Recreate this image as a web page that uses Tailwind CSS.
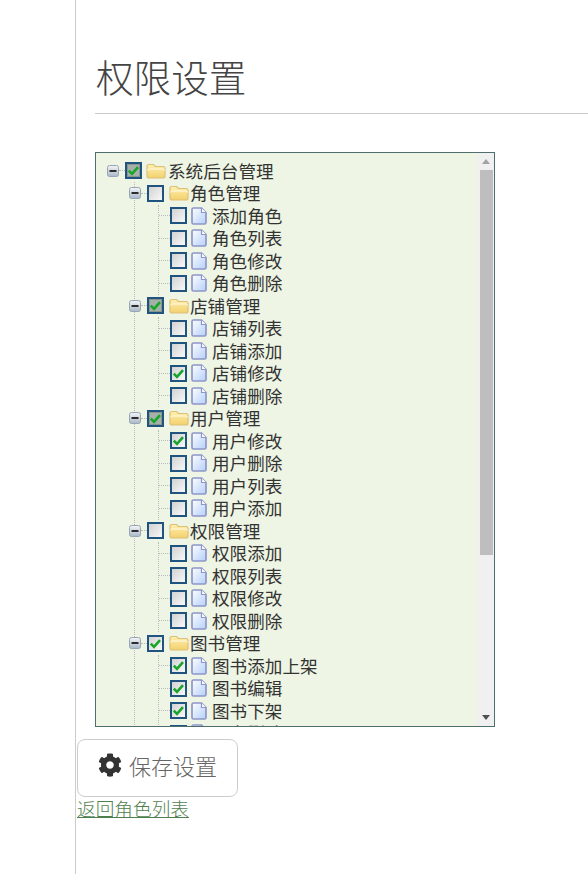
<!DOCTYPE html>
<html lang="zh-CN">
  <head>
    <meta charset="UTF-8" />
    <title>权限设置</title>
    <script src="https://cdn.jsdelivr.net/npm/@tailwindcss/browser@4"></script>
  </head>
  <body class="bg-white font-['Noto_Sans_CJK_SC',sans-serif] text-[#333]">
    <!-- shared tree icons -->
    <svg class="absolute h-0 w-0">
      <defs>
        <linearGradient id="boxFill" x1="0" y1="0" x2="1" y2="1">
          <stop offset="0" stop-color="#cfcfcf" />
          <stop offset="1" stop-color="#fbfbfb" />
        </linearGradient>
        <linearGradient id="folderFill" x1="0" y1="0" x2="0" y2="1">
          <stop offset="0" stop-color="#fff0b0" />
          <stop offset="1" stop-color="#f3d06c" />
        </linearGradient>
        <linearGradient id="fileFill" x1="0" y1="0" x2="1" y2="1">
          <stop offset="0" stop-color="#fdfeff" />
          <stop offset="1" stop-color="#b5cffa" />
        </linearGradient>
        <linearGradient id="minusFill" x1="0" y1="0" x2="0" y2="1">
          <stop offset="0" stop-color="#f4f6f8" />
          <stop offset="1" stop-color="#a9b7c7" />
        </linearGradient>
        <symbol id="empty" viewBox="0 0 17 17">
          <rect x="1" y="1" width="15" height="15" fill="url(#boxFill)" stroke="#1f5480" stroke-width="2" />
        </symbol>
        <symbol id="checked" viewBox="0 0 17 17">
          <rect x="1" y="1" width="15" height="15" fill="url(#boxFill)" stroke="#1f5480" stroke-width="2" />
          <path d="M3.8 8.6l3.2 3.2 6-6.6" fill="none" stroke="#17a62a" stroke-width="2.6" />
        </symbol>
        <symbol id="partial" viewBox="0 0 17 17">
          <rect x="1" y="1" width="15" height="15" fill="#8b938f" stroke="#1f5480" stroke-width="2" />
          <rect x="3" y="3" width="11" height="11" fill="#a5b0a9" />
          <path d="M3.8 8.6l3.2 3.2 6-6.6" fill="none" stroke="#17a62a" stroke-width="2.6" />
        </symbol>
        <symbol id="folder" viewBox="0 0 20 16">
          <path d="M1 13V3.5Q1 1.5 3 1.5h4.5l2 2H17q2 0 2 2V13q0 2-2 2H3q-2 0-2-2z" fill="url(#folderFill)" stroke="#dcc07a" stroke-width="1.2" />
          <path d="M1.5 7.5q0-1.5 1.5-1.5h14q1.5 0 1.5 1.5" fill="none" stroke="#fffbe6" />
        </symbol>
        <symbol id="file" viewBox="0 0 17 18">
          <path d="M2.5 1h8l4.5 4.5V15.5q0 1.5-1.5 1.5h-11Q1 17 1 15.5V2.5Q1 1 2.5 1z" fill="url(#fileFill)" stroke="#8f97c9" stroke-width="1.7" />
          <path d="M10.5 1v4.5H15" fill="#fff" stroke="#8f97c9" stroke-width="1.2" />
        </symbol>
        <symbol id="minus" viewBox="0 0 12 12">
          <rect x="0.5" y="0.5" width="11" height="11" rx="2" fill="url(#minusFill)" stroke="#97a5b5" />
          <rect x="2.5" y="5" width="7" height="2" fill="#2d2d2d" />
        </symbol>
      </defs>
    </svg>

    <main class="ml-[75px] min-h-[874px] border-l border-[#ccc]">
      <h1 class="ml-[19px] border-b border-[#ccc] pt-[56px] pb-[17px] pl-px text-[37.6px] leading-10 font-light text-[#444]">权限设置</h1>

      <div class="relative mt-[38px] ml-[19px] h-[575px] w-[400px] overflow-hidden border border-[#4f6f6f] bg-[#eef5e4] text-[17.6px]">
        <ul class="pt-[6.5px]">
          <li>
            <div class="flex h-[22.5px] items-center pl-[11px]">
              <svg class="h-3 w-3 shrink-0"><use href="#minus" /></svg>
              <span class="w-[6px] border-t border-dotted border-[#bbb]"></span>
              <svg class="h-[17px] w-[17px] shrink-0"><use href="#partial" /></svg>
              <svg class="ml-1 h-4 w-5 shrink-0"><use href="#folder" /></svg>
              <span class="ml-[2px]">系统后台管理</span>
            </div>

            <ul class="ml-[38px] border-l border-dotted border-[#bbb]">
              <li>
                <div class="flex h-[22.5px] items-center">
                  <svg class="-ml-[6px] h-3 w-3 shrink-0"><use href="#minus" /></svg>
                  <span class="w-[6px] border-t border-dotted border-[#bbb]"></span>
                  <svg class="h-[17px] w-[17px] shrink-0"><use href="#empty" /></svg>
                  <svg class="ml-[5px] h-4 w-5 shrink-0"><use href="#folder" /></svg>
                  <span class="ml-[1px]">角色管理</span>
                </div>
                <ul class="ml-[23px] border-l border-dotted border-[#bbb]">
                  <li class="flex h-[22.5px] items-center"><span class="w-[11px] border-t border-dotted border-[#bbb]"></span><svg class="h-[17px] w-[17px] shrink-0"><use href="#empty" /></svg><svg class="ml-[4px] h-[18px] w-[17px] shrink-0"><use href="#file" /></svg><span class="ml-[4px]">添加角色</span></li>
                  <li class="flex h-[22.5px] items-center"><span class="w-[11px] border-t border-dotted border-[#bbb]"></span><svg class="h-[17px] w-[17px] shrink-0"><use href="#empty" /></svg><svg class="ml-[4px] h-[18px] w-[17px] shrink-0"><use href="#file" /></svg><span class="ml-[4px]">角色列表</span></li>
                  <li class="flex h-[22.5px] items-center"><span class="w-[11px] border-t border-dotted border-[#bbb]"></span><svg class="h-[17px] w-[17px] shrink-0"><use href="#empty" /></svg><svg class="ml-[4px] h-[18px] w-[17px] shrink-0"><use href="#file" /></svg><span class="ml-[4px]">角色修改</span></li>
                  <li class="flex h-[22.5px] items-center"><span class="w-[11px] border-t border-dotted border-[#bbb]"></span><svg class="h-[17px] w-[17px] shrink-0"><use href="#empty" /></svg><svg class="ml-[4px] h-[18px] w-[17px] shrink-0"><use href="#file" /></svg><span class="ml-[4px]">角色删除</span></li>
                </ul>
              </li>
              <li>
                <div class="flex h-[22.5px] items-center">
                  <svg class="-ml-[6px] h-3 w-3 shrink-0"><use href="#minus" /></svg>
                  <span class="w-[6px] border-t border-dotted border-[#bbb]"></span>
                  <svg class="h-[17px] w-[17px] shrink-0"><use href="#partial" /></svg>
                  <svg class="ml-[5px] h-4 w-5 shrink-0"><use href="#folder" /></svg>
                  <span class="ml-[1px]">店铺管理</span>
                </div>
                <ul class="ml-[23px] border-l border-dotted border-[#bbb]">
                  <li class="flex h-[22.5px] items-center"><span class="w-[11px] border-t border-dotted border-[#bbb]"></span><svg class="h-[17px] w-[17px] shrink-0"><use href="#empty" /></svg><svg class="ml-[4px] h-[18px] w-[17px] shrink-0"><use href="#file" /></svg><span class="ml-[4px]">店铺列表</span></li>
                  <li class="flex h-[22.5px] items-center"><span class="w-[11px] border-t border-dotted border-[#bbb]"></span><svg class="h-[17px] w-[17px] shrink-0"><use href="#empty" /></svg><svg class="ml-[4px] h-[18px] w-[17px] shrink-0"><use href="#file" /></svg><span class="ml-[4px]">店铺添加</span></li>
                  <li class="flex h-[22.5px] items-center"><span class="w-[11px] border-t border-dotted border-[#bbb]"></span><svg class="h-[17px] w-[17px] shrink-0"><use href="#checked" /></svg><svg class="ml-[4px] h-[18px] w-[17px] shrink-0"><use href="#file" /></svg><span class="ml-[4px]">店铺修改</span></li>
                  <li class="flex h-[22.5px] items-center"><span class="w-[11px] border-t border-dotted border-[#bbb]"></span><svg class="h-[17px] w-[17px] shrink-0"><use href="#empty" /></svg><svg class="ml-[4px] h-[18px] w-[17px] shrink-0"><use href="#file" /></svg><span class="ml-[4px]">店铺删除</span></li>
                </ul>
              </li>
              <li>
                <div class="flex h-[22.5px] items-center">
                  <svg class="-ml-[6px] h-3 w-3 shrink-0"><use href="#minus" /></svg>
                  <span class="w-[6px] border-t border-dotted border-[#bbb]"></span>
                  <svg class="h-[17px] w-[17px] shrink-0"><use href="#partial" /></svg>
                  <svg class="ml-[5px] h-4 w-5 shrink-0"><use href="#folder" /></svg>
                  <span class="ml-[1px]">用户管理</span>
                </div>
                <ul class="ml-[23px] border-l border-dotted border-[#bbb]">
                  <li class="flex h-[22.5px] items-center"><span class="w-[11px] border-t border-dotted border-[#bbb]"></span><svg class="h-[17px] w-[17px] shrink-0"><use href="#checked" /></svg><svg class="ml-[4px] h-[18px] w-[17px] shrink-0"><use href="#file" /></svg><span class="ml-[4px]">用户修改</span></li>
                  <li class="flex h-[22.5px] items-center"><span class="w-[11px] border-t border-dotted border-[#bbb]"></span><svg class="h-[17px] w-[17px] shrink-0"><use href="#empty" /></svg><svg class="ml-[4px] h-[18px] w-[17px] shrink-0"><use href="#file" /></svg><span class="ml-[4px]">用户删除</span></li>
                  <li class="flex h-[22.5px] items-center"><span class="w-[11px] border-t border-dotted border-[#bbb]"></span><svg class="h-[17px] w-[17px] shrink-0"><use href="#empty" /></svg><svg class="ml-[4px] h-[18px] w-[17px] shrink-0"><use href="#file" /></svg><span class="ml-[4px]">用户列表</span></li>
                  <li class="flex h-[22.5px] items-center"><span class="w-[11px] border-t border-dotted border-[#bbb]"></span><svg class="h-[17px] w-[17px] shrink-0"><use href="#empty" /></svg><svg class="ml-[4px] h-[18px] w-[17px] shrink-0"><use href="#file" /></svg><span class="ml-[4px]">用户添加</span></li>
                </ul>
              </li>
              <li>
                <div class="flex h-[22.5px] items-center">
                  <svg class="-ml-[6px] h-3 w-3 shrink-0"><use href="#minus" /></svg>
                  <span class="w-[6px] border-t border-dotted border-[#bbb]"></span>
                  <svg class="h-[17px] w-[17px] shrink-0"><use href="#empty" /></svg>
                  <svg class="ml-[5px] h-4 w-5 shrink-0"><use href="#folder" /></svg>
                  <span class="ml-[1px]">权限管理</span>
                </div>
                <ul class="ml-[23px] border-l border-dotted border-[#bbb]">
                  <li class="flex h-[22.5px] items-center"><span class="w-[11px] border-t border-dotted border-[#bbb]"></span><svg class="h-[17px] w-[17px] shrink-0"><use href="#empty" /></svg><svg class="ml-[4px] h-[18px] w-[17px] shrink-0"><use href="#file" /></svg><span class="ml-[4px]">权限添加</span></li>
                  <li class="flex h-[22.5px] items-center"><span class="w-[11px] border-t border-dotted border-[#bbb]"></span><svg class="h-[17px] w-[17px] shrink-0"><use href="#empty" /></svg><svg class="ml-[4px] h-[18px] w-[17px] shrink-0"><use href="#file" /></svg><span class="ml-[4px]">权限列表</span></li>
                  <li class="flex h-[22.5px] items-center"><span class="w-[11px] border-t border-dotted border-[#bbb]"></span><svg class="h-[17px] w-[17px] shrink-0"><use href="#empty" /></svg><svg class="ml-[4px] h-[18px] w-[17px] shrink-0"><use href="#file" /></svg><span class="ml-[4px]">权限修改</span></li>
                  <li class="flex h-[22.5px] items-center"><span class="w-[11px] border-t border-dotted border-[#bbb]"></span><svg class="h-[17px] w-[17px] shrink-0"><use href="#empty" /></svg><svg class="ml-[4px] h-[18px] w-[17px] shrink-0"><use href="#file" /></svg><span class="ml-[4px]">权限删除</span></li>
                </ul>
              </li>
              <li>
                <div class="flex h-[22.5px] items-center">
                  <svg class="-ml-[6px] h-3 w-3 shrink-0"><use href="#minus" /></svg>
                  <span class="w-[6px] border-t border-dotted border-[#bbb]"></span>
                  <svg class="h-[17px] w-[17px] shrink-0"><use href="#checked" /></svg>
                  <svg class="ml-[5px] h-4 w-5 shrink-0"><use href="#folder" /></svg>
                  <span class="ml-[1px]">图书管理</span>
                </div>
                <ul class="ml-[23px] border-l border-dotted border-[#bbb]">
                  <li class="flex h-[22.5px] items-center"><span class="w-[11px] border-t border-dotted border-[#bbb]"></span><svg class="h-[17px] w-[17px] shrink-0"><use href="#checked" /></svg><svg class="ml-[4px] h-[18px] w-[17px] shrink-0"><use href="#file" /></svg><span class="ml-[4px]">图书添加上架</span></li>
                  <li class="flex h-[22.5px] items-center"><span class="w-[11px] border-t border-dotted border-[#bbb]"></span><svg class="h-[17px] w-[17px] shrink-0"><use href="#checked" /></svg><svg class="ml-[4px] h-[18px] w-[17px] shrink-0"><use href="#file" /></svg><span class="ml-[4px]">图书编辑</span></li>
                  <li class="flex h-[22.5px] items-center"><span class="w-[11px] border-t border-dotted border-[#bbb]"></span><svg class="h-[17px] w-[17px] shrink-0"><use href="#checked" /></svg><svg class="ml-[4px] h-[18px] w-[17px] shrink-0"><use href="#file" /></svg><span class="ml-[4px]">图书下架</span></li>
                  <li class="flex h-[22.5px] items-center"><span class="w-[11px] border-t border-dotted border-[#bbb]"></span><svg class="h-[17px] w-[17px] shrink-0"><use href="#checked" /></svg><svg class="ml-[4px] h-[18px] w-[17px] shrink-0"><use href="#file" /></svg><span class="ml-[4px]">图书删除</span></li>
                </ul>
              </li>
            </ul>
          </li>
        </ul>

        <!-- scrollbar -->
        <div class="absolute top-0 right-0 flex h-full w-[17px] flex-col items-center bg-[#f0f0f0]">
          <svg class="mt-[6px] h-[5px] w-[8px]" viewBox="0 0 8 5"><path d="M4 0l4 5H0z" fill="#a3a3a3" /></svg>
          <div class="mt-[6px] ml-[1px] h-[385px] w-[13px] bg-[#bebebe]"></div>
          <svg class="mt-auto mb-[6px] h-[5px] w-[8px]" viewBox="0 0 8 5"><path d="M0 0h8L4 5z" fill="#505050" /></svg>
        </div>
      </div>

      <button class="mt-3 ml-px flex h-[58px] w-[161px] items-center justify-center gap-[7px] rounded-lg border border-[#ccc] bg-white pb-[6px] text-[22px] font-light text-[#666]">
        <svg class="h-[24px] w-[24px]" viewBox="0 0 512 512"><path fill="#333" d="M487.4 315.7l-42.6-24.6c4.3-23.2 4.3-47 0-70.2l42.6-24.6c4.9-2.8 7.1-8.6 5.5-14-11.1-35.6-30-67.8-54.7-94.6-3.8-4.1-10-5.1-14.8-2.3L380.8 110c-17.9-15.4-38.5-27.3-60.8-35.1V25.8c0-5.6-3.9-10.5-9.4-11.7-36.7-8.2-74.3-7.8-109.2 0-5.5 1.2-9.4 6.1-9.4 11.7V75c-22.2 7.9-42.8 19.8-60.8 35.1L88.7 85.5c-4.9-2.8-11-1.9-14.8 2.3-24.7 26.7-43.6 58.9-54.7 94.6-1.7 5.4.6 11.2 5.5 14L67.3 221c-4.3 23.2-4.3 47 0 70.2l-42.6 24.6c-4.9 2.8-7.1 8.6-5.5 14 11.1 35.6 30 67.8 54.7 94.6 3.8 4.1 10 5.1 14.8 2.3l42.6-24.6c17.9 15.4 38.5 27.3 60.8 35.1v49.2c0 5.6 3.9 10.5 9.4 11.7 36.7 8.2 74.3 7.8 109.2 0 5.5-1.2 9.4-6.1 9.4-11.7v-49.2c22.2-7.9 42.8-19.8 60.8-35.1l42.6 24.6c4.9 2.8 11 1.9 14.8-2.3 24.7-26.7 43.6-58.9 54.7-94.6 1.5-5.5-.7-11.3-5.6-14.1zM256 336c-44.1 0-80-35.9-80-80s35.9-80 80-80 80 35.9 80 80-35.9 80-80 80z" /></svg>
        保存设置
      </button>
      <a href="#" class="ml-px -mt-px block w-fit text-[18.67px] leading-6 font-light text-[#4f7f4f] underline">返回角色列表</a>
    </main>
  </body>
</html>
